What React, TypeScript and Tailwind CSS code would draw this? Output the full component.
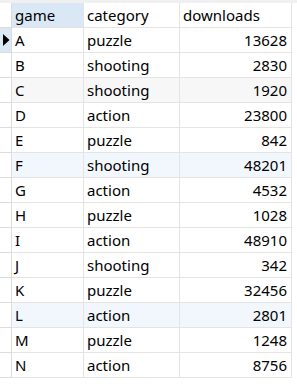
import React from 'react';

const rows: [string, string, number][] = [
  ['A', 'puzzle', 13628],
  ['B', 'shooting', 2830],
  ['C', 'shooting', 1920],
  ['D', 'action', 23800],
  ['E', 'puzzle', 842],
  ['F', 'shooting', 48201],
  ['G', 'action', 4532],
  ['H', 'puzzle', 1028],
  ['I', 'action', 48910],
  ['J', 'shooting', 342],
  ['K', 'puzzle', 32456],
  ['L', 'action', 2801],
  ['M', 'puzzle', 1248],
  ['N', 'action', 8756],
];

// row tints as seen in the grid
const tint: Record<string, string> = {
  C: 'bg-[#f7f7f7]',
  F: 'bg-[#f2f7fd]',
  L: 'bg-[#f2f7fd]',
};

export default function App() {
  return (
    <div
      className="w-[297px] h-[384px] bg-white text-[15px] text-black overflow-hidden"
      style={{ fontFamily: '"Noto Sans", "Segoe UI", sans-serif' }}
    >
      <div className="h-[3px] bg-[#f0f0f0]" />
      <div className="grid grid-cols-[12px_72px_96px_112px]">
        {/* header */}
        <div className="h-[25px] border-r border-b border-[#dcdcdc] bg-white" />
        <div className="h-[25px] border-r border-b border-[#e4e4e4] bg-[#dae8f6] pl-[3px] leading-[24px]">game</div>
        <div className="h-[25px] border-r border-b border-[#e4e4e4] pl-[3px] leading-[24px]">category</div>
        <div className="h-[25px] border-r border-b border-[#e4e4e4] pl-[3px] leading-[24px]">downloads</div>

        {rows.map(([g, c, d], i) => {
          const bg = tint[g] ?? 'bg-white';
          return (
            <React.Fragment key={g}>
              <div
                className={`h-[25px] border-r border-b border-[#dcdcdc] flex items-center justify-center ${
                  i === 0 ? 'bg-[#dae8f6]' : 'bg-white'
                }`}
              >
                {i === 0 && (
                  <svg width="8" height="12" viewBox="0 0 8 12">
                    <path d="M1 0 L7.5 6 L1 12 Z" fill="#000" />
                  </svg>
                )}
              </div>
              <div className={`h-[25px] border-r border-b border-[#e4e4e4] pl-[3px] leading-[24px] ${bg}`}>{g}</div>
              <div className={`h-[25px] border-r border-b border-[#e4e4e4] pl-[3px] leading-[24px] ${bg}`}>{c}</div>
              <div className={`h-[25px] border-r border-b border-[#e4e4e4] pr-[4px] text-right leading-[24px] ${bg}`}>{d}</div>
            </React.Fragment>
          );
        })}
      </div>
    </div>
  );
}
